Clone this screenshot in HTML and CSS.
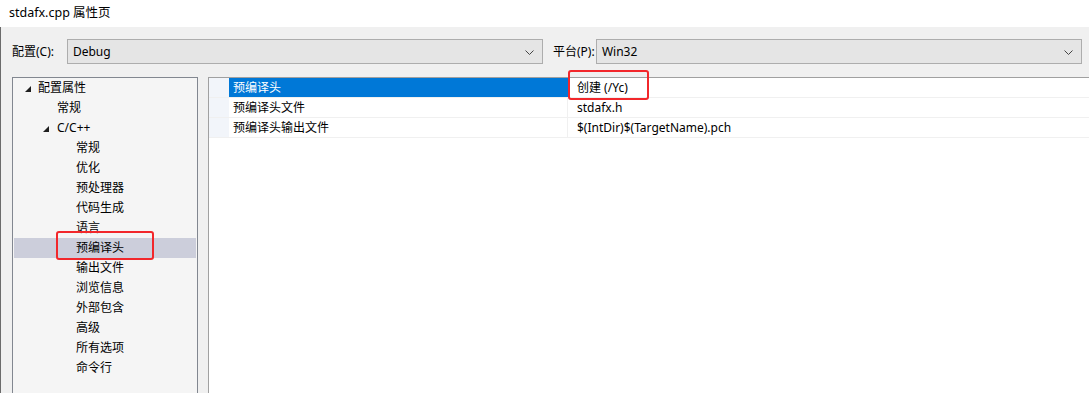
FILE: index.html
```html
<!DOCTYPE html>
<html lang="zh-CN">
<head>
<meta charset="utf-8">
<title>stdafx.cpp 属性页</title>
<link rel="stylesheet" href="styles.css">
</head>
<body>
<div class="window">
  <div class="titlebar">stdafx.cpp 属性页</div>
  <div class="client">
    <div class="toolbar">
      <span class="lbl lbl-config">配置(C):</span>
      <div class="combo combo-config">
        <span class="combo-text">Debug</span>
        <svg class="chev" width="9" height="5" viewBox="0 0 9 5"><polyline points="0.5,0.5 4.5,4.5 8.5,0.5" fill="none" stroke="#444" stroke-width="1"/></svg>
      </div>
      <span class="lbl lbl-platform">平台(P):</span>
      <div class="combo combo-platform">
        <span class="combo-text">Win32</span>
        <svg class="chev" width="9" height="5" viewBox="0 0 9 5"><polyline points="0.5,0.5 4.5,4.5 8.5,0.5" fill="none" stroke="#444" stroke-width="1"/></svg>
      </div>
    </div>
    <div class="main">
      <div class="tree">
        <div class="node l0"><span class="tri"><svg width="6" height="6" viewBox="0 0 6 6"><polygon points="6,0 6,6 0,6" fill="#1e1e1e"/></svg></span>配置属性</div>
        <div class="node l1">常规</div>
        <div class="node l1 exp"><span class="tri"><svg width="6" height="6" viewBox="0 0 6 6"><polygon points="6,0 6,6 0,6" fill="#1e1e1e"/></svg></span>C/C++</div>
        <div class="node l2">常规</div>
        <div class="node l2">优化</div>
        <div class="node l2">预处理器</div>
        <div class="node l2">代码生成</div>
        <div class="node l2">语言</div>
        <div class="node l2 sel">预编译头</div>
        <div class="node l2">输出文件</div>
        <div class="node l2">浏览信息</div>
        <div class="node l2">外部包含</div>
        <div class="node l2">高级</div>
        <div class="node l2">所有选项</div>
        <div class="node l2">命令行</div>
        <div class="mark mark-tree"></div>
      </div>
      <div class="grid">
        <div class="row sel">
          <div class="margin"></div>
          <div class="name">预编译头</div>
          <div class="value">创建 (/Yc)</div>
        </div>
        <div class="row">
          <div class="margin"></div>
          <div class="name">预编译头文件</div>
          <div class="value">stdafx.h</div>
        </div>
        <div class="row">
          <div class="margin"></div>
          <div class="name">预编译头输出文件</div>
          <div class="value">$(IntDir)$(TargetName).pch</div>
        </div>
        <div class="mark mark-grid"></div>
      </div>
    </div>
  </div>
</div>
</body>
</html>
```
FILE: styles.css
```css
* { box-sizing: border-box; }
html, body {
  margin: 0;
  padding: 0;
  width: 1089px;
  height: 393px;
  overflow: hidden;
  background: #f0f0f0;
}
body {
  font-family: "Noto Sans", "Noto Sans CJK SC", sans-serif;
  font-size: 12px;
  color: #000;
}
.window {
  width: 1089px;
  height: 393px;
  display: flex;
  flex-direction: column;
}
.titlebar {
  height: 27px;
  background: #fff;
  padding-left: 9px;
  line-height: 26px;
  font-size: 12.5px;
  flex: none;
}
.client {
  flex: 1;
  border-left: 1px solid #6b6b6b;
  display: flex;
  flex-direction: column;
  min-height: 0;
}
.toolbar {
  display: flex;
  align-items: center;
  padding: 12px 7px 0 11px;
  height: 37px;
  flex: none;
}
.lbl { white-space: nowrap; line-height: 25px; }
.lbl-config { width: 55px; }
.lbl-platform { margin-left: 10px; width: 43px; }
.combo {
  height: 25px;
  background: #e5e5e5;
  border: 1px solid #adadad;
  display: flex;
  align-items: center;
  justify-content: space-between;
  padding: 0 8px 0 5px;
}
.combo-config { width: 477px; }
.combo-platform { width: 487px; }
.combo-text { line-height: 23px; }
.chev { display: block; margin-top: 1px; }
.main {
  flex: 1;
  display: flex;
  padding: 13px 0 0 11px;
  gap: 10px;
  min-height: 0;
}
.tree {
  position: relative;
  width: 186px;
  flex: none;
  background: #f5f5f5;
  border: 1px solid #828790;
  border-bottom: none;
  padding: 0 1px;
}
.node {
  height: 20px;
  line-height: 20px;
  white-space: nowrap;
  position: relative;
}
.node.l0 { padding-left: 24px; }
.node.l1 { padding-left: 43px; }
.node.l2 { padding-left: 62px; }
.node.sel { background: #cccedb; }
.tri {
  position: absolute;
  top: 8px;
  width: 6px;
  height: 6px;
}
.tri svg { display: block; }
.l0 .tri { left: 11px; }
.l1 .tri { left: 29px; }
.grid {
  position: relative;
  flex: 1;
  background: #fff;
  border-left: 1px solid #a0a0a0;
  border-top: 1px solid #a0a0a0;
}
.row {
  display: flex;
  height: 20px;
  line-height: 19px;
  border-bottom: 1px solid #f0f0f0;
}
.row .margin {
  width: 20px;
  flex: none;
  background: #f2f5fa;
}
.row .name {
  width: 339px;
  flex: none;
  padding-left: 4px;
  border-right: 1px solid #f0f0f0;
  white-space: nowrap;
}
.row .value {
  flex: 1;
  padding-left: 9px;
  white-space: nowrap;
}
.row.sel .name {
  background: #0078d7;
  color: #fff;
  border-right-color: #0078d7;
}
.mark {
  position: absolute;
  border: 2px solid #f2272b;
  border-radius: 3px;
  pointer-events: none;
}
.mark-tree {
  left: 43px;
  top: 153px;
  width: 98px;
  height: 29px;
}
.mark-grid {
  left: 359px;
  top: -8px;
  width: 81px;
  height: 30px;
}
```
